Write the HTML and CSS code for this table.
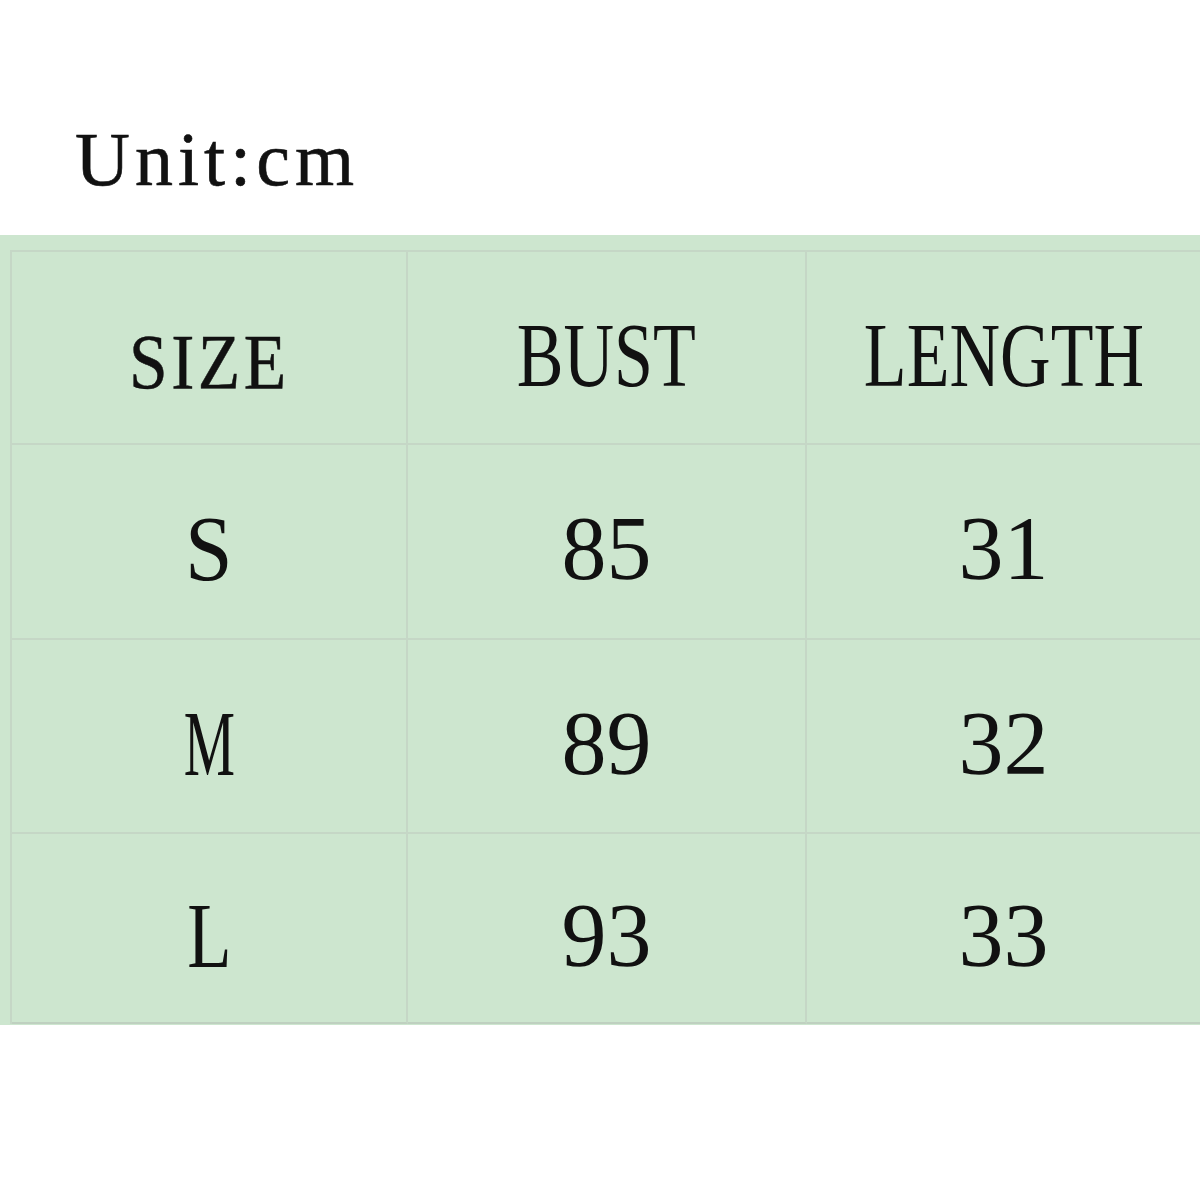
FILE: index.html
```html
<!DOCTYPE html>
<html>
<head>
<meta charset="utf-8">
<link rel="stylesheet" href="styles.css">
</head>
<body>
<div class="top">
  <span class="unit">Unit:cm</span>
</div>
<div class="sheet">
  <div class="grid">
    <div class="cell head size-cell"><span class="size">SIZE</span></div>
    <div class="cell head"><span class="cond">BUST</span></div>
    <div class="cell head end"><span class="cond">LENGTH</span></div>

    <div class="cell"><span class="let let-s">S</span></div>
    <div class="cell"><span class="num">85</span></div>
    <div class="cell end"><span class="num">31</span></div>

    <div class="cell"><span class="let let-m">M</span></div>
    <div class="cell"><span class="num">89</span></div>
    <div class="cell end"><span class="num">32</span></div>

    <div class="cell last"><span class="let let-l">L</span></div>
    <div class="cell last"><span class="num">93</span></div>
    <div class="cell last end"><span class="num">33</span></div>
  </div>
</div>
</body>
</html>
```
FILE: styles.css
```css
* { box-sizing: border-box; }
html, body { margin: 0; padding: 0; background: #ffffff; }
body { width: 1200px; height: 1200px; overflow: hidden; color: #111111; }

.top {
  height: 235px;
  padding: 121px 0 0 75px;
}
.unit {
  display: inline-block;
  font-family: "Liberation Serif", "Times New Roman", serif;
  font-size: 76px;
  line-height: 76px;
  letter-spacing: 5px;
  -webkit-text-stroke: 0.6px #111111;
  white-space: nowrap;
}

.sheet {
  background: #cde6cf;
  height: 790px;
  padding: 15px 0 0 10px;
}
.grid {
  display: grid;
  grid-template-columns: 396px 399px 1fr;
  grid-template-rows: 193px 195px 194px 190px;
  border-top: 2px solid #c5d7c6;
  border-left: 2px solid #c5d7c6;
}
.cell {
  display: flex;
  align-items: center;
  justify-content: center;
  border-right: 2px solid #c5d7c6;
  border-bottom: 2px solid #c5d7c6;
  padding-top: 15px;
}
.cell.end { border-right: none; }
.cell.last { border-bottom-color: #bfd0c0; }
.head { padding-top: 16px; }
.head.size-cell { padding-top: 28px; }

.cond {
  display: inline-block;
  font-family: "Liberation Serif", "Times New Roman", serif;
  font-size: 91px;
  line-height: 91px;
  transform: scaleX(0.77);
  white-space: nowrap;
}
.size {
  display: inline-block;
  font-family: "Liberation Serif", "Times New Roman", serif;
  font-size: 79px;
  line-height: 79px;
  letter-spacing: 4px;
  transform: scaleX(0.88);
  -webkit-text-stroke: 0.5px #111111;
  white-space: nowrap;
}
.num, .let {
  display: inline-block;
  font-family: "Liberation Serif", "Times New Roman", serif;
  font-size: 90px;
  line-height: 90px;
}
.let { font-size: 93px; }
.let-s { transform: scaleX(0.92); }
.let-m { transform: scaleX(0.62); }
.let-l { transform: scaleX(0.78); }
```
